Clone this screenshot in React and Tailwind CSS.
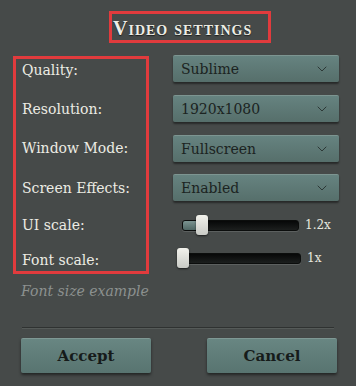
import React from "react";
import { ChevronDown } from "lucide-react";

const serif = { fontFamily: '"DejaVu Serif", "Liberation Serif", serif' };

function Select({ value }) {
  return (
    <div className="flex h-[27px] w-[166px] items-center justify-between rounded-[2px] border-t border-[#7d9591] bg-gradient-to-b from-[#668380] to-[#566f6b] pl-[8px] pr-[9px] text-[14px] text-[#1b2321] shadow-[0_2px_2px_rgba(0,0,0,0.45)]">
      <span>{value}</span>
      <ChevronDown size={16} strokeWidth={1.5} color="#2c3836" />
    </div>
  );
}

function Slider({ pct, offset, width, label }) {
  const fill = Math.round(width * pct);
  return (
    <div className="flex h-[20px] items-center">
      <div className="relative flex h-[20px] items-center" style={{ marginLeft: offset, width }}>
        <div className="h-[11px] w-full overflow-hidden rounded-[3px] border border-[#0b0d0c] bg-gradient-to-b from-[#070808] to-[#1c1f1e] shadow-[0_1px_0_rgba(255,255,255,0.12)]">
          <div className="h-full bg-gradient-to-b from-[#7b9491] to-[#4f6764]" style={{ width: fill }} />
        </div>
        <div
          className="absolute top-0 h-[20px] w-[12px] rounded-[3px] bg-gradient-to-b from-[#f2f2ec] to-[#c9cbc6] shadow-[0_1px_2px_rgba(0,0,0,0.6)]"
          style={{ left: Math.max(0, fill - 6) }}
        />
      </div>
      <span className="ml-[6px] text-[12px] text-[#e6e6de]">{label}</span>
    </div>
  );
}

function Button({ children }) {
  return (
    <button className="h-[35px] w-[130px] rounded-[2px] border-t border-[#7f9894] bg-gradient-to-b from-[#688682] to-[#587470] text-[15px] font-bold text-[#161b1a] shadow-[0_2px_3px_rgba(0,0,0,0.5)]">
      {children}
    </button>
  );
}

export default function App() {
  const labels = [
    ["Quality:", 1],
    ["Resolution:", 19],
    ["Window Mode:", 19],
    ["Screen Effects:", 20],
    ["UI scale:", 17],
    ["Font scale:", 15],
  ];

  return (
    <div className="h-[386px] w-[356px] overflow-hidden bg-[#464a49] text-[#ecece4]" style={serif}>
      {/* Title */}
      <div className="pt-[11px]">
        <div className="ml-[109px] flex h-[32px] w-[162px] items-center border-[3px] border-[#e13b3d] pl-[1px] pt-[2px]">
          <span
            className="text-[20px] font-bold leading-none tracking-[1px] text-[#eeeee6] [font-variant:small-caps]"
            style={{ fontFamily: '"Liberation Serif", serif', textShadow: "0 1px 1px rgba(0,0,0,0.6)" }}
          >
            Video settings
          </span>
        </div>
      </div>

      {/* Settings */}
      <div className="mt-[12px] flex">
        <div className="ml-[13px] mt-[1px] flex h-[218px] w-[136px] flex-col border-[3px] border-[#e13b3d] pl-[6px]">
          {labels.map(([text, mt]) => (
            <div key={text} className="h-[20px] text-[14px] leading-[20px]" style={{ marginTop: mt }}>
              {text}
            </div>
          ))}
        </div>

        <div className="ml-[24px] flex flex-col">
          <Select value="Sublime" />
          <div className="mt-[13px]">
            <Select value="1920x1080" />
          </div>
          <div className="mt-[13px]">
            <Select value="Fullscreen" />
          </div>
          <div className="mt-[12px]">
            <Select value="Enabled" />
          </div>
          <div className="mt-[14px]">
            <Slider pct={0.17} offset={9} width={117} label="1.2x" />
          </div>
          <div className="mt-[13px]">
            <Slider pct={0} offset={4} width={124} label="1x" />
          </div>
        </div>
      </div>

      <div className="ml-[21px] mt-[7px] text-[14px] italic text-[#8c918f]">Font size example</div>

      {/* Divider */}
      <div className="mx-[22px] mt-[25px] h-[2px] border-t border-b border-t-[#2f3231] border-b-[#555a58]" />

      {/* Buttons */}
      <div className="ml-[21px] mr-[19px] mt-[9px] flex justify-between">
        <Button>Accept</Button>
        <Button>Cancel</Button>
      </div>
    </div>
  );
}
